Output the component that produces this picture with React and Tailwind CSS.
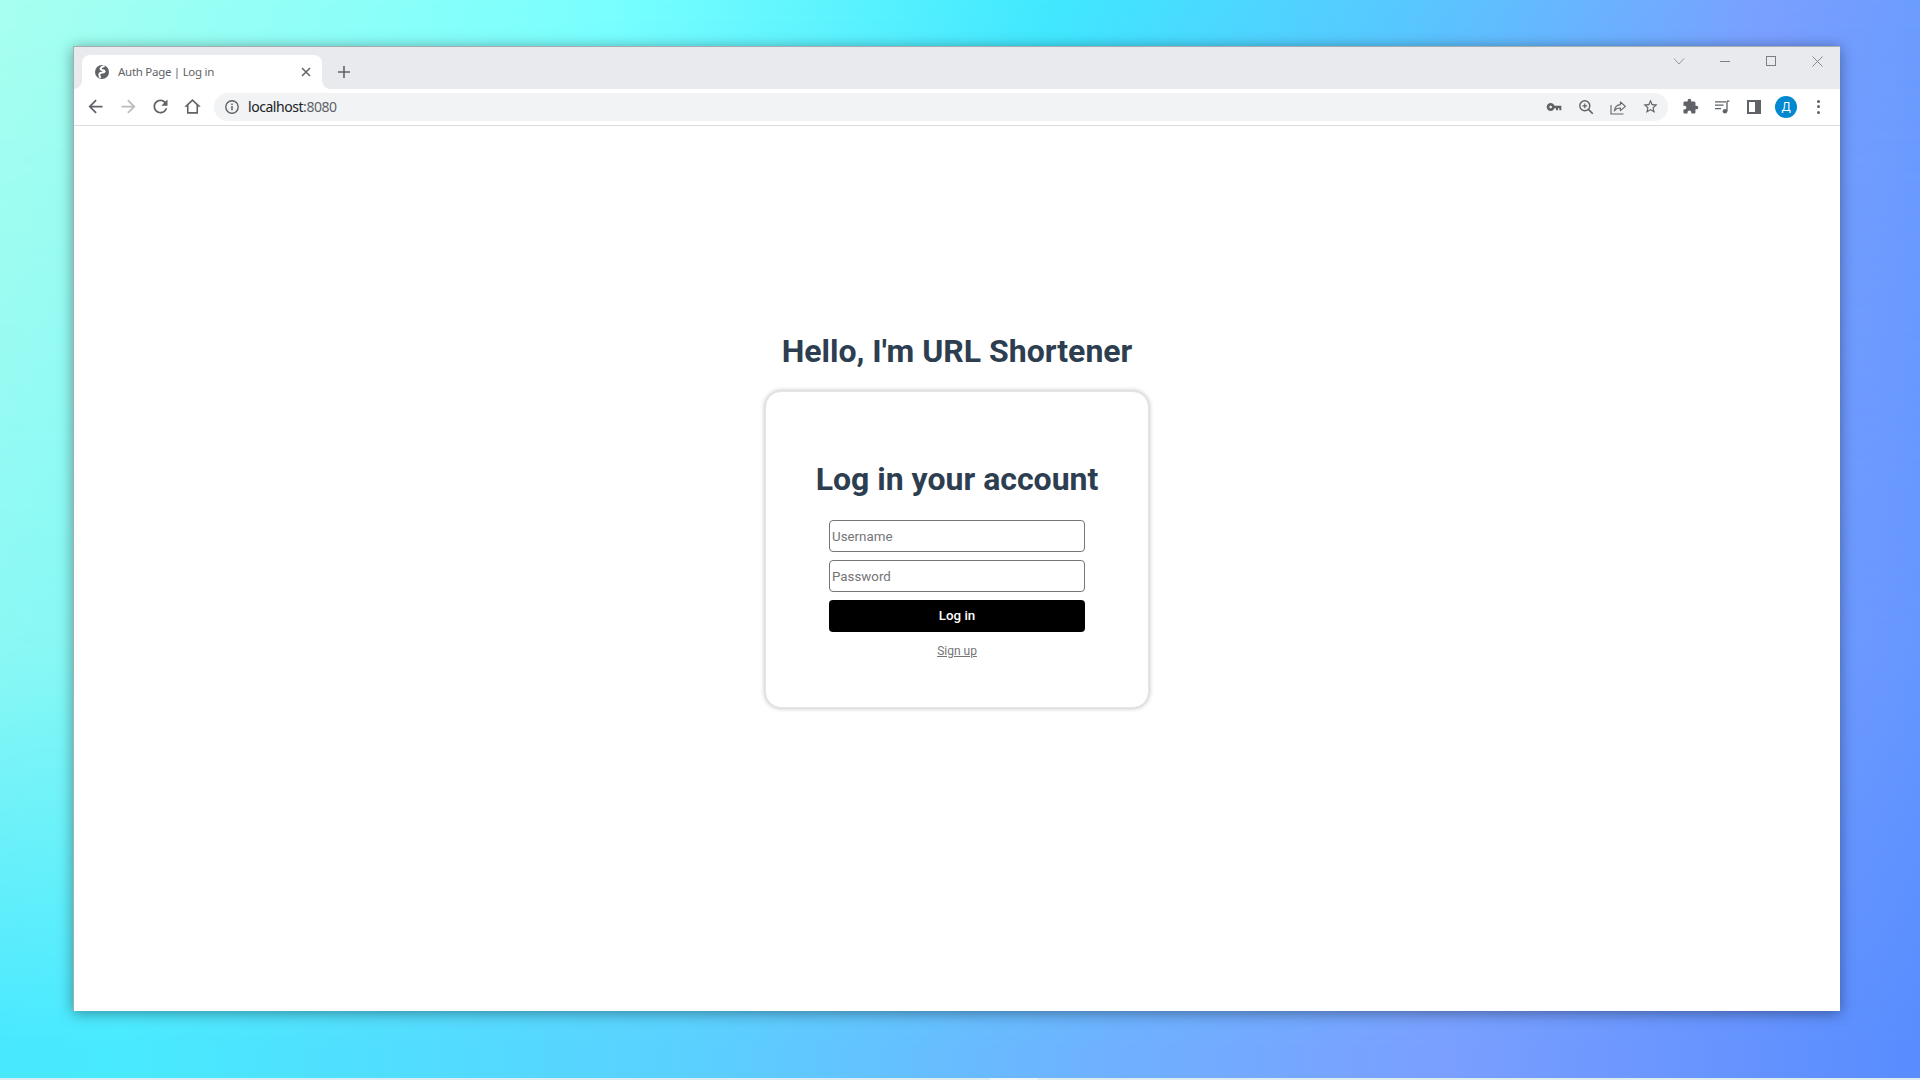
import React from "react";

const C = "#5f6368";

function Icon({ size = 16, box = 24, children, className = "" }) {
  return (
    <svg width={size} height={size} viewBox={`0 0 ${box} ${box}`} className={`shrink-0 ${className}`}>
      {children}
    </svg>
  );
}

function Slot({ w = "w-8", children }) {
  return <div className={`${w} h-7 flex items-center justify-center shrink-0`}>{children}</div>;
}

function Tab() {
  return (
    <div className="relative w-[240px] h-[34px] ml-2 bg-white rounded-t-[8px] flex items-center pl-[13px] pr-[8px] shrink-0">
      <span className="absolute -left-2 bottom-0 w-2 h-2 bg-[radial-gradient(circle_at_0_0,transparent_7.5px,#ffffff_8px)]" />
      <span className="absolute -right-2 bottom-0 w-2 h-2 bg-[radial-gradient(circle_at_100%_0,transparent_7.5px,#ffffff_8px)]" />
      <Icon size={14} box={14}>
        <circle cx="7" cy="7" r="7" fill={C} />
        <path d="M9.6 0.9 C7.6 1.5 5.4 2.6 5.6 4.2 C5.8 5.6 9.2 4.9 9.6 6.2 C10 7.6 6.2 7.2 4.9 8.2 C3.8 9.1 4.4 10.9 5.4 12.9" fill="none" stroke="#ffffff" strokeWidth="2" />
      </Icon>
      <span className="ml-[9px] text-[11.5px] leading-4 text-[#5f6368] font-['Noto_Sans',sans-serif] tracking-[-0.28px] whitespace-nowrap">
        Auth Page | Log in
      </span>
      <div className="ml-auto w-4 h-4 flex items-center justify-center">
        <Icon size={10} box={10}>
          <path d="M1 1l8 8M9 1L1 9" stroke={C} strokeWidth="1.5" fill="none" />
        </Icon>
      </div>
    </div>
  );
}

function TitleBar() {
  return (
    <div className="h-[42px] bg-[#e8eaed] flex items-end shrink-0">
      <Tab />
      <div className="ml-[16px] h-[34px] flex items-center">
        <Icon size={12} box={12}>
          <path d="M6 0v12M0 6h12" stroke={C} strokeWidth="1.6" fill="none" />
        </Icon>
      </div>
      <div className="ml-auto self-start h-[28px] flex items-center">
        <div className="w-[46px] flex justify-center">
          <Icon size={12} box={12}>
            <path d="M1 3.5l5 5.5 5-5.5" stroke="#8d9094" strokeWidth="0.9" fill="none" />
          </Icon>
        </div>
        <div className="w-[46px] flex justify-center">
          <div className="w-[10px] h-px bg-[#7b7e82]" />
        </div>
        <div className="w-[46px] flex justify-center">
          <div className="w-[10px] h-[10px] border border-[#7b7e82]" />
        </div>
        <div className="w-[46px] flex justify-center">
          <Icon size={11} box={11}>
            <path d="M.5.5l10 10M10.5.5l-10 10" stroke="#7b7e82" strokeWidth="0.9" fill="none" />
          </Icon>
        </div>
      </div>
    </div>
  );
}

function Omnibox() {
  return (
    <div className="ml-[6px] flex-1 h-7 rounded-full bg-[#f1f3f4] flex items-center pl-[10px] pr-[2px]">
      <Icon size={16} box={16}>
        <circle cx="8" cy="8" r="6.2" fill="none" stroke={C} strokeWidth="1.4" />
        <path d="M8 7v4.2M8 4.6v1.4" stroke={C} strokeWidth="1.5" fill="none" />
      </Icon>
      <span className="ml-[8px] text-[14px] leading-5 font-['Noto_Sans',sans-serif] tracking-[-0.45px] text-[#202124]">
        localhost<span className="text-[#5f6368]">:8080</span>
      </span>
      <div className="ml-auto flex items-center">
        <Slot>
          <Icon size={16} box={24}>
            <path fill={C} d="M12.65 10C11.83 7.67 9.61 6 7 6c-3.31 0-6 2.69-6 6s2.69 6 6 6c2.61 0 4.83-1.67 5.65-4H15v3h3v-3h2v3h3v-7H12.65zM7 14c-1.1 0-2-.9-2-2s.9-2 2-2 2 .9 2 2-.9 2-2 2z" />
          </Icon>
        </Slot>
        <Slot>
          <Icon size={16} box={16}>
            <circle cx="6.8" cy="6.8" r="5" fill="none" stroke={C} strokeWidth="1.4" />
            <path d="M10.4 10.4l4.4 4.4" stroke={C} strokeWidth="1.6" fill="none" />
            <path d="M6.8 4.4v4.8M4.4 6.8h4.8" stroke={C} strokeWidth="1.2" fill="none" />
          </Icon>
        </Slot>
        <Slot>
          <Icon size={16} box={16}>
            <path d="M1 6v9h12.5" stroke={C} strokeWidth="1.1" fill="none" />
            <path d="M4.4 12C4.4 8 7.2 5.6 10.4 5.6V3l5 4.4-5 4.2V9c-2.6 0-4.6.8-6 3z" stroke={C} strokeWidth="1.1" fill="none" strokeLinejoin="round" />
          </Icon>
        </Slot>
        <Slot>
          <Icon size={17} box={24}>
            <path fill={C} d="M22 9.24l-7.19-.62L12 2 9.19 8.63 2 9.24l5.46 4.73L5.82 21 12 17.27 18.18 21l-1.63-7.03L22 9.24zM12 15.4l-3.76 2.27 1-4.28-3.32-2.88 4.38-.38L12 6.1l1.71 4.04 4.38.38-3.32 2.88 1 4.28L12 15.4z" />
          </Icon>
        </Slot>
      </div>
    </div>
  );
}

function Toolbar() {
  return (
    <div className="h-[37px] bg-white border-b border-[#dadce0] flex items-center pl-[6px] pb-[1px] pr-[6px] shrink-0">
      <div className="flex items-center">
        <Slot>
          <Icon size={21} className="-ml-[1px]">
            <path fill={C} d="M20 11H7.83l5.59-5.59L12 4l-8 8 8 8 1.41-1.41L7.83 13H20v-2z" />
          </Icon>
        </Slot>
        <Slot>
          <Icon size={21}>
            <path fill="#babcbe" d="M4 11h12.17l-5.59-5.59L12 4l8 8-8 8-1.41-1.41L16.17 13H4v-2z" />
          </Icon>
        </Slot>
        <Slot>
          <Icon size={21}>
            <path fill={C} d="M17.65 6.35A7.958 7.958 0 0 0 12 4c-4.42 0-7.99 3.58-7.99 8s3.57 8 7.99 8c3.73 0 6.84-2.55 7.73-6h-2.08A5.99 5.99 0 0 1 12 18c-3.31 0-6-2.69-6-6s2.69-6 6-6c1.66 0 3.14.69 4.22 1.78L13 11h7V4l-2.35 2.35z" />
          </Icon>
        </Slot>
        <Slot>
          <Icon size={19}>
            <path fill={C} fillRule="evenodd" d="M12 2.6L1.6 12.2H5V21h14v-8.8h3.4L12 2.6zm0 2.8l5 4.6V19H7v-9l5-4.6z" />
          </Icon>
        </Slot>
      </div>
      <Omnibox />
      <div className="flex items-center ml-[6px]">
        <Slot>
          <Icon size={17}>
            <path fill={C} d="M20.5 11H19V7c0-1.1-.9-2-2-2h-4V3.5C13 2.12 11.88 1 10.5 1S8 2.12 8 3.5V5H4c-1.1 0-1.99.9-1.99 2v3.8H3.5c1.49 0 2.7 1.21 2.7 2.7s-1.21 2.7-2.7 2.7H2V20c0 1.1.9 2 2 2h3.8v-1.5c0-1.49 1.21-2.7 2.7-2.7 1.49 0 2.7 1.21 2.7 2.7V22H17c1.1 0 2-.9 2-2v-4h1.5c1.38 0 2.5-1.12 2.5-2.5S21.88 11 20.5 11z" />
          </Icon>
        </Slot>
        <Slot>
          <Icon size={16} box={16}>
            <path d="M1 2.8h11M1 6.2h8.5M1 9.6h6" stroke={C} strokeWidth="1.3" fill="none" />
            <path d="M13 2.2H15.4M13 2.2V12" stroke={C} strokeWidth="1.3" fill="none" />
            <circle cx="11" cy="12.3" r="2.3" fill={C} />
          </Icon>
        </Slot>
        <Slot>
          <div className="w-[14px] h-[14px] border-2 border-[#5f6368] flex justify-end">
            <div className="w-1 h-full bg-[#5f6368]" />
          </div>
        </Slot>
        <Slot>
          <div className="w-[22px] h-[22px] rounded-full bg-[#0288d1] text-white text-[12px] leading-none flex items-center justify-center font-['Noto_Sans',sans-serif]">
            Д
          </div>
        </Slot>
        <Slot>
          <div className="flex flex-col gap-[2.5px]">
            <div className="w-[3px] h-[3px] rounded-full bg-[#5f6368]" />
            <div className="w-[3px] h-[3px] rounded-full bg-[#5f6368]" />
            <div className="w-[3px] h-[3px] rounded-full bg-[#5f6368]" />
          </div>
        </Slot>
      </div>
    </div>
  );
}

function Field({ placeholder, type }) {
  return (
    <input
      type={type}
      placeholder={placeholder}
      className="w-[256px] h-8 px-[2px] bg-white border border-[#767676] rounded-[4px] text-[13.33px] outline-none placeholder:text-[#757575]"
    />
  );
}

function Page() {
  return (
    <div className="flex-1 bg-white flex flex-col items-center justify-center pb-[97px] font-['Roboto',sans-serif]">
      <h1 className="text-[32px] leading-[38px] font-bold text-[#2c3e50] mb-[21px]">Hello, I'm URL Shortener</h1>
      <div className="w-[384px] h-[317px] bg-white rounded-[16px] border border-[#e6e6e6] shadow-[0_0_5px_rgba(0,0,0,0.3)] flex flex-col items-center pt-[68px]">
        <h2 className="text-[32px] leading-[38px] font-bold text-[#2c3e50] mb-[22px]">Log in your account</h2>
        <div className="flex flex-col gap-2 items-center">
          <Field placeholder="Username" type="text" />
          <Field placeholder="Password" type="password" />
          <button className="w-[256px] h-8 bg-black text-white rounded-[4px] text-[13.33px] font-medium">Log in</button>
        </div>
        <a href="#" className="mt-[12px] text-[12px] leading-[14px] text-[#757575] underline">
          Sign up
        </a>
      </div>
    </div>
  );
}

export default function App() {
  return (
    <div className="relative w-full h-screen overflow-hidden bg-[linear-gradient(90deg,#a8fff0_0%,#88fffa_22%,#78ffff_32%,#40e8ff_55%,#58c8ff_73%,#7aa0ff_92%,#6c9cff_100%)]">
      <div className="absolute inset-0 bg-[linear-gradient(90deg,#48e8ff_0%,#48eaff_6%,#5ad0ff_36%,#6fb0ff_58%,#7a9fff_75%,#588cff_100%)] [mask-image:linear-gradient(180deg,transparent_0%,rgba(0,0,0,0.3)_60%,rgba(0,0,0,1)_97%)]" />
      <div className="absolute left-0 right-0 bottom-0 h-[2px] bg-[#dcecf0]">
        <div className="ml-[990px] w-[48px] h-full bg-[#eef6fa]" />
      </div>
      <div className="relative pt-[46px] pl-[73px]">
        <div className="w-[1767px] h-[965px] flex flex-col border border-[#8d9a9f]/80 border-r-0 border-b-0 bg-white shadow-[0_2px_14px_rgba(0,0,0,0.4)]">
          <TitleBar />
          <Toolbar />
          <Page />
        </div>
      </div>
    </div>
  );
}
